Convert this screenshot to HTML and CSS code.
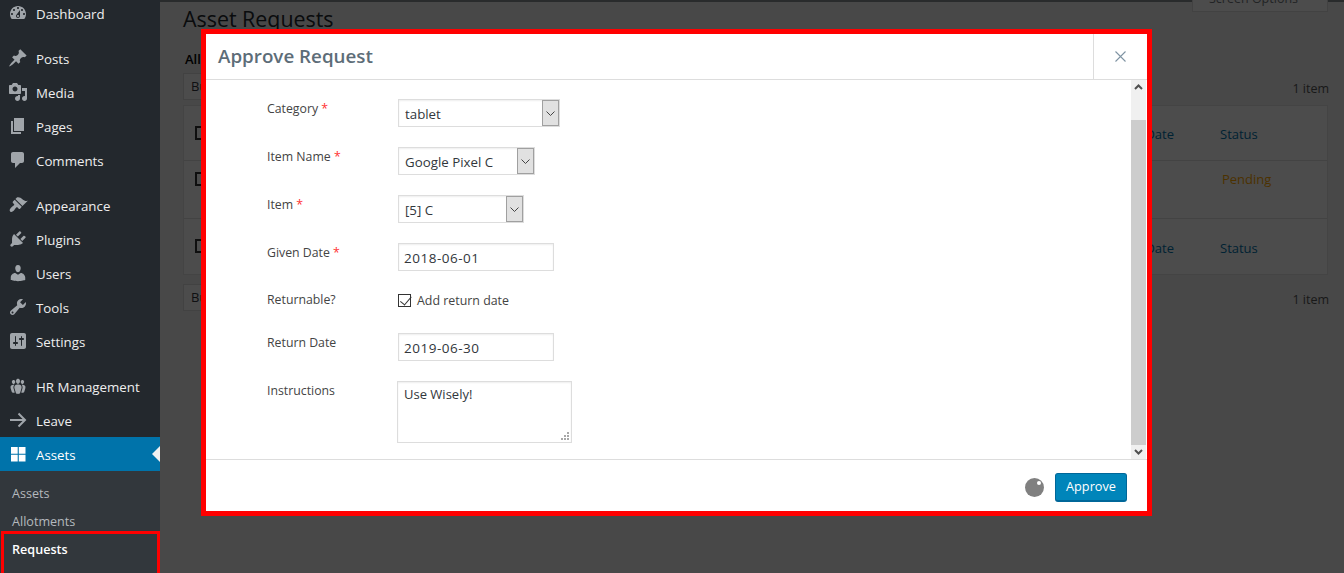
FILE: index.html
```html
<!DOCTYPE html>
<html lang="en">
<head>
<meta charset="utf-8">
<title>Asset Requests</title>
<link rel="stylesheet" href="styles.css">
</head>
<body>
<div class="page">
  <nav class="sidebar">
    <ul class="menu">
      <li class="item"><svg class="icon" viewBox="0 0 20 20"><path fill-rule="evenodd" d="M3.76 16h12.48c1.1-1.37 1.76-3.11 1.76-5 0-4.42-3.58-8-8-8s-8 3.58-8 8c0 1.89.66 3.63 1.76 5zM10 4c.55 0 1 .45 1 1s-.45 1-1 1-1-.45-1-1 .45-1 1-1zM6 6c.55 0 1 .45 1 1s-.45 1-1 1-1-.45-1-1 .45-1 1-1zm8 0c.55 0 1 .45 1 1s-.45 1-1 1-1-.45-1-1 .45-1 1-1zm-5.37 5.55L12 7v6c0 1.1-.9 2-2 2s-2-.9-2-2c0-.57.24-1.08.63-1.45zM4 10c.55 0 1 .45 1 1s-.45 1-1 1-1-.45-1-1 .45-1 1-1zm12 0c.55 0 1 .45 1 1s-.45 1-1 1-1-.45-1-1 .45-1 1-1zm-5 3c0-.55-.45-1-1-1s-1 .45-1 1 .45 1 1 1 1-.45 1-1z"/></svg><span class="item-text">Dashboard</span></li>
      <li class="item sep"><svg class="icon" viewBox="0 0 20 20"><path d="M10.44 3.02l1.82-1.82 6.36 6.35-1.83 1.82c-1.05-.68-2.48-.57-3.41.36l-.75.75c-.92.93-1.04 2.35-.35 3.41l-1.83 1.82-2.41-2.41-2.8 2.79c-.42.42-3.38 2.71-3.8 2.29s1.86-3.39 2.28-3.81l2.79-2.79L4.1 9.36l1.83-1.82c1.05.69 2.48.57 3.4-.36l.75-.75c.93-.92 1.05-2.35.36-3.41z"/></svg><span class="item-text">Posts</span></li>
      <li class="item"><svg class="icon" viewBox="0 0 20 20"><path fill-rule="evenodd" d="M13 11V4c0-.55-.45-1-1-1h-1.67L9 1H5L3.67 3H2c-.55 0-1 .45-1 1v7c0 .55.45 1 1 1h10c.55 0 1-.45 1-1zM7 4.5c1.38 0 2.5 1.12 2.5 2.5S8.38 9.5 7 9.5 4.5 8.38 4.5 7 5.62 4.5 7 4.5zM14 6h5v10.5c0 1.38-1.12 2.5-2.5 2.5S14 17.88 14 16.5s1.12-2.5 2.5-2.5c.17 0 .34.02.5.05V9h-3V6zm-4 8.05V13h2v3.5c0 1.38-1.12 2.5-2.5 2.5S7 17.88 7 16.5 8.12 14 9.5 14c.17 0 .34.02.5.05z"/></svg><span class="item-text">Media</span></li>
      <li class="item"><svg class="icon" viewBox="0 0 20 20"><path d="M6 15V2h10v13H6zm-1 1h8v2H3V5h2v11z"/></svg><span class="item-text">Pages</span></li>
      <li class="item"><svg class="icon" viewBox="0 0 20 20"><path d="M5 2h9c1.1 0 2 .9 2 2v7c0 1.1-.9 2-2 2h-2l-5 5v-5H5c-1.1 0-2-.9-2-2V4c0-1.1.9-2 2-2z"/></svg><span class="item-text">Comments</span></li>
      <li class="item sep"><svg class="icon" viewBox="0 0 20 20"><path d="M14.48 11.06L7.41 3.99l1.5-1.5c.5-.56 2.3-.47 3.51.32 1.21.8 1.43 1.28 2.91 2.1 1.18.64 2.45 1.26 4.45.85zm-.71.71L6.7 4.7 4.93 6.47c-.39.39-.39 1.02 0 1.41l1.06 1.06c.39.39.39 1.03 0 1.42-.6.6-1.43 1.11-2.21 1.69-.35.26-.7.53-1.01.84-1.1 1.1-1.5 2.6-.6 3.5.9.9 2.4.5 3.5-.6.31-.31.58-.66.84-1.01.58-.78 1.09-1.61 1.69-2.21.39-.39 1.03-.39 1.42 0l1.06 1.06c.39.39 1.02.39 1.41 0z"/></svg><span class="item-text">Appearance</span></li>
      <li class="item"><svg class="icon" viewBox="0 0 20 20"><path d="M13.11 4.36L9.87 7.6 8 5.73l3.24-3.24c.35-.34 1.05-.2 1.56.32.52.51.66 1.21.31 1.55zm-8 1.77l.91-1.12 9.01 9.01-1.19.84c-.71.71-2.63 1.16-3.82 1.16H6.14L4.9 17.26c-.59.59-1.54.59-2.12 0-.59-.58-.59-1.53 0-2.12l1.24-1.24v-3.88c0-1.13.4-3.19 1.09-3.89zm7.26 3.97l3.24-3.24c.34-.35 1.04-.21 1.55.31.52.51.66 1.21.31 1.55l-3.24 3.25z"/></svg><span class="item-text">Plugins</span></li>
      <li class="item"><svg class="icon" viewBox="0 0 20 20"><path d="M10 9.25c-2.27 0-2.73-3.44-2.73-3.44C7 4.02 7.82 2 9.97 2c2.16 0 2.98 2.02 2.71 3.81 0 0-.41 3.44-2.68 3.44zm0 2.57L12.72 10c2.39 0 4.52 2.33 4.52 4.53v2.49s-3.65 1.13-7.24 1.13c-3.65 0-7.24-1.13-7.24-1.13v-2.49c0-2.25 1.94-4.48 4.47-4.48z"/></svg><span class="item-text">Users</span></li>
      <li class="item"><svg class="icon" viewBox="0 0 20 20"><path fill-rule="evenodd" d="M16.68 9.77c-1.34 1.34-3.3 1.67-4.95.99l-5.41 6.52c-.99.99-2.59.99-3.58 0s-.99-2.59 0-3.57l6.52-5.42c-.68-1.65-.35-3.61.99-4.95 1.28-1.28 3.12-1.62 4.72-1.06l-2.89 2.89 2.82 2.82 2.86-2.87c.53 1.58.18 3.39-1.08 4.65zM3.81 16.21c.4.39 1.04.39 1.43 0 .4-.4.4-1.04 0-1.43-.39-.4-1.03-.4-1.43 0-.39.39-.39 1.03 0 1.43z"/></svg><span class="item-text">Tools</span></li>
      <li class="item"><svg class="icon" viewBox="0 0 20 20"><path fill-rule="evenodd" d="M18 16V4c0-1.1-.9-2-2-2H4c-1.1 0-2 .9-2 2v12c0 1.1.9 2 2 2h12c1.1 0 2-.9 2-2zM8 11h1c.55 0 1 .45 1 1s-.45 1-1 1H8v1.5c0 .28-.22.5-.5.5s-.5-.22-.5-.5V13H6c-.55 0-1-.45-1-1s.45-1 1-1h1V5.5c0-.28.22-.5.5-.5s.5.22.5.5V11zm5-2h-1c-.55 0-1-.45-1-1s.45-1 1-1h1V5.5c0-.28.22-.5.5-.5s.5.22.5.5V7h1c.55 0 1 .45 1 1s-.45 1-1 1h-1v5.5c0 .28-.22.5-.5.5s-.5-.22-.5-.5V9z"/></svg><span class="item-text">Settings</span></li>
      <li class="item sep"><svg class="icon" viewBox="0 0 20 20"><path d="M8.03 4.46c-.29 1.28.55 3.46 1.97 3.46 1.41 0 2.25-2.18 1.96-3.46-.22-.98-1.08-1.63-1.96-1.63-.89 0-1.74.65-1.97 1.63zm-4.13.9c-.25 1.08.47 2.93 1.67 2.93s1.92-1.85 1.67-2.93c-.19-.83-.92-1.39-1.67-1.39s-1.48.56-1.67 1.39zm8.86 0c-.25 1.08.47 2.93 1.66 2.93 1.2 0 1.92-1.85 1.67-2.93-.19-.83-.92-1.39-1.67-1.39-.74 0-1.47.56-1.66 1.39zm-.59 11.43l1.25-4.3C14.2 10 12.71 8.47 10 8.47c-2.72 0-4.21 1.53-3.44 4.02l1.26 4.3C8.05 17.51 9 18 10 18c.98 0 1.94-.49 2.17-1.21zm-6.1-7.63c-.49.67-.96 1.83-.42 3.59l1.12 3.79c-.34.2-.77.31-1.2.31-.85 0-1.65-.41-1.85-1.03l-1.07-3.65c-.65-2.11.61-3.4 2.92-3.4.27 0 .54.02.79.06-.1.1-.2.22-.29.33zm8.35-.39c2.31 0 3.58 1.29 2.92 3.4l-1.07 3.65c-.2.62-1 1.03-1.85 1.03-.43 0-.86-.11-1.2-.31l1.11-3.77c.55-1.78.08-2.94-.42-3.61-.08-.11-.18-.23-.28-.33.25-.04.51-.06.79-.06z"/></svg><span class="item-text">HR Management</span></li>
      <li class="item"><svg class="icon" viewBox="0 0 20 20"><path class="arrow" d="M2 10h15M10.5 3.5L17 10l-6.5 6.5"/></svg><span class="item-text">Leave</span></li>
      <li class="item active"><svg class="icon" viewBox="0 0 20 20"><path d="M3 3h6.7v6.7H3zM10.8 3h6.7v6.7h-6.7zM3 10.8h6.7v6.7H3zM10.8 10.8h6.7v6.7h-6.7z"/></svg><span class="item-text">Assets</span></li>
    </ul>
    <ul class="submenu">
      <li class="subitem">Assets</li>
      <li class="subitem">Allotments</li>
      <li class="subitem current">Requests</li>
    </ul>
  </nav>

  <main class="main">
    <div class="topstrip"></div>
    <div class="screen-tab-row"><span class="screen-tab">Screen Options</span></div>
    <h1 class="title">Asset Requests</h1>
    <div class="filters"><b>All</b></div>
    <div class="tablenav"><span class="bulk">Bulk Actions</span><span class="count">1 item</span></div>
    <div class="table">
      <div class="row head"><span class="cb"></span><span class="date">Return Date</span><a class="status">Status</a></div>
      <div class="row body"><span class="cb"></span><span class="pending">Pending</span></div>
      <div class="row foot"><span class="cb"></span><span class="date">Return Date</span><a class="status">Status</a></div>
    </div>
    <div class="tablenav lower"><span class="bulk">Bulk Actions</span><span class="count">1 item</span></div>
    <div class="dim"></div>
  </main>
</div>

<section class="modal">
  <header class="modal-head">
    <h2 class="modal-title">Approve Request</h2>
    <button class="close" type="button">
      <svg class="close-x" viewBox="0 0 11 11"><path d="M.5.5l10 10M10.5.5l-10 10"/></svg>
    </button>
  </header>
  <div class="modal-body">
    <form class="form">
      <div class="field"><label class="label">Category <i>*</i></label>
        <span class="select w-cat"><select><option>tablet</option></select><span class="select-btn"><svg viewBox="0 0 9 5"><path d="M.5.5l4 4 4-4"/></svg></span></span></div>
      <div class="field"><label class="label">Item Name <i>*</i></label>
        <span class="select w-name"><select><option>Google Pixel C</option></select><span class="select-btn"><svg viewBox="0 0 9 5"><path d="M.5.5l4 4 4-4"/></svg></span></span></div>
      <div class="field"><label class="label">Item <i>*</i></label>
        <span class="select w-item"><select><option>[5] C</option></select><span class="select-btn"><svg viewBox="0 0 9 5"><path d="M.5.5l4 4 4-4"/></svg></span></span></div>
      <div class="field"><label class="label">Given Date <i>*</i></label><input class="input" type="text" value="2018-06-01"></div>
      <div class="field short"><label class="label">Returnable?</label><label class="check"><input type="checkbox" checked>Add return date</label></div>
      <div class="field"><label class="label">Return Date</label><input class="input" type="text" value="2019-06-30"></div>
      <div class="field last"><label class="label">Instructions</label>
        <span class="textarea-wrap"><textarea class="textarea">Use Wisely!</textarea><svg class="grip" viewBox="0 0 8 8"><path d="M6 0h2v2H6zM3 3h2v2H3zM6 3h2v2H6zM0 6h2v2H0zM3 6h2v2H3zM6 6h2v2H6z"/></svg></span></div>
    </form>
    <div class="scrollbar">
      <span class="sb-btn"><svg viewBox="0 0 9 6"><path d="M1 5l3.5-3.5L8 5"/></svg></span>
      <span class="sb-gap"></span>
      <span class="sb-thumb"></span>
      <span class="sb-btn"><svg viewBox="0 0 9 6"><path d="M1 1l3.5 3.5L8 1"/></svg></span>
    </div>
  </div>
  <footer class="modal-foot">
    <span class="spinner"></span>
    <button class="approve" type="button">Approve</button>
  </footer>
</section>
</body>
</html>
```
FILE: styles.css
```css
* { box-sizing: border-box; }
html, body { margin: 0; height: 573px; overflow: hidden; }
body { font-family: "Open Sans", "Noto Sans", sans-serif; font-size: 13px; color: #444; background: #f1f1f1; }
ul { list-style: none; margin: 0; padding: 0; }

.page { display: flex; height: 573px; }

/* Sidebar */
.sidebar { width: 160px; flex: none; background: #23282d; overflow: hidden; }
.menu { margin-top: -4px; }
.item { display: flex; align-items: center; height: 34px; padding-left: 8px; gap: 8px; font-size: 13.3px; color: #eee; position: relative; }
.item-text { padding-top: 2px; }
.item.sep { margin-top: 11px; }
.icon { width: 20px; height: 20px; fill: #a0a5aa; flex: none; }
.arrow { fill: none; stroke: #a0a5aa; stroke-width: 2; }
.item.active { background: #0073aa; color: #fff; }
.item.active .icon { fill: #fff; }
.item.active::after { content: ""; position: absolute; right: 0; top: 9px; border: 8px solid transparent; border-right-color: #f1f1f1; border-left-width: 0; }
.submenu { background: #32373c; padding-top: 9px; height: 103px; }
.subitem { height: 28px; line-height: 28px; padding-left: 12px; font-size: 12.6px; color: #b4b9be; }
.subitem.current { color: #fff; font-weight: 600; position: relative; }
.subitem.current::after { content: ""; position: absolute; left: 1px; right: 0; top: -5px; height: 39px; border: 3px solid #f00; }

/* Main page, dimmed */
.main { flex: 1; position: relative; overflow: hidden; padding: 0 16px 0 23px; }
.topstrip { height: 2px; margin: 0 -16px 0 -23px; background: #8a9095; }
.screen-tab-row { display: flex; justify-content: flex-end; height: 0; }
.screen-tab { margin-top: -9px; height: 19px; width: 136px; padding-left: 16px; border: 1px solid #ddd; background: #fff; line-height: 10px; font-size: 12.5px; white-space: nowrap; color: #72777c; }
.title { margin: 2px 0 0; font-size: 21.4px; font-weight: 400; line-height: 29px; color: #23282d; }
.filters { margin-top: 16px; height: 20px; padding-left: 2px; line-height: 20px; color: #000; }
.filters b { font-weight: 600; }
.tablenav { display: flex; justify-content: space-between; align-items: center; height: 27px; margin-top: 4px; }
.bulk { height: 27px; width: 120px; border: 1px solid #ddd; background: #fff; line-height: 24px; padding-left: 7px; color: #32373c; }
.count { position: relative; top: 2px; left: 1px; font-size: 12.5px; color: #555; }
.table { margin-top: 5px; border: 1px solid #e5e5e5; background: #fff; }
.row { position: relative; padding-left: 11px; border-bottom: 1px solid #e1e1e1; }
.row:last-child { border-bottom: 0; }
.head { height: 55px; }
.body { height: 58px; }
.foot { height: 55px; }
.cb { display: inline-block; width: 14px; height: 14px; margin-top: 20px; border: 2px solid #333; }
.body .cb { margin-top: 11px; }
.date, .status, .pending { position: absolute; top: 18px; font-size: 13px; line-height: 20px; white-space: nowrap; }
.foot .date, .foot .status { top: 19px; }
.date { right: 153px; color: #0073aa; }
.status { left: 1036px; color: #0073aa; }
.pending { left: 1038px; top: 8px; color: #ffa700; }
.tablenav.lower { margin-top: 9px; }
.dim { position: absolute; inset: 0; z-index: 1; background: rgba(0, 0, 0, .7); }

/* Modal */
.modal { position: fixed; z-index: 3; left: 201px; top: 29px; width: 951px; height: 487px; border: 5px solid #f00; background: #fff; display: flex; flex-direction: column; }
.modal-head { display: flex; height: 46px; flex: none; border-bottom: 1px solid #ddd; }
.modal-title { flex: 1; margin: 0; padding-left: 12px; font-size: 18.8px; font-weight: 600; line-height: 45px; color: #5d6d78; }
.close { width: 54px; margin: 0; padding: 0; border: 0; border-left: 1px solid #ddd; background: #fff; display: flex; align-items: center; justify-content: center; }
.close-x { width: 11px; height: 11px; fill: none; stroke: #7f94a3; stroke-width: 1.1; }
.modal-body { flex: 1; display: flex; min-height: 0; }
.form { flex: 1; padding: 19px 0 0 61px; }
.field { display: flex; align-items: flex-start; height: 28px; margin-bottom: 20px; }
.field.short { height: 22px; }
.field.last { margin-bottom: 0; height: 62px; }
.label { width: 131px; flex: none; padding-top: 1px; font-size: 12.3px; line-height: 18px; color: #444; }
.label i { font-style: normal; color: #f33; }
.short .label { padding-top: 0; }

.select { position: relative; display: block; height: 28px; }
.select select { appearance: none; -webkit-appearance: none; width: 100%; height: 28px; margin: 0; padding: 2px 0 0 6px; border: 1px solid #ddd; border-radius: 0; background: #fff; box-shadow: inset 0 1px 2px rgba(0, 0, 0, .07); font: 13.3px "Open Sans", sans-serif; color: #32373c; }
.select-btn { position: absolute; right: 1px; top: 1px; bottom: 1px; width: 17px; background: #e1e1e1; border: 1px solid #a0a0a0; display: flex; align-items: center; justify-content: center; }
.select-btn svg { width: 9px; height: 5px; fill: none; stroke: #444; stroke-width: 1; }
.w-cat { width: 162px; }
.w-name { width: 137px; }
.w-item { width: 126px; }
.input { width: 156px; height: 28px; margin: 0; padding: 2px 5px 0; border: 1px solid #ddd; background: #fff; box-shadow: inset 0 1px 2px rgba(0, 0, 0, .07); font: 13.5px "Open Sans", sans-serif; letter-spacing: .5px; color: #32373c; outline: 0; }
.check { display: flex; align-items: center; height: 18px; font-size: 12.4px; color: #444; }
.check input { appearance: none; -webkit-appearance: none; position: relative; width: 13px; height: 13px; margin: 0 6px 0 0; border: 1px solid #333; background: #fff; }
.check input::after { content: ""; position: absolute; left: 3.5px; top: -.5px; width: 5px; height: 9.5px; border: solid #333; border-width: 0 1.2px 1.2px 0; transform: rotate(40deg); }
.textarea-wrap { position: relative; display: block; width: 175px; height: 62px; margin-left: -1px; }
.textarea { display: block; width: 100%; height: 100%; margin: 0; padding: 3px 6px; border: 1px solid #ddd; background: #fff; box-shadow: inset 0 1px 2px rgba(0, 0, 0, .07); font: 13px "Open Sans", sans-serif; color: #32373c; outline: 0; resize: none; }
.grip { position: absolute; right: 3px; bottom: 3px; width: 8px; height: 8px; fill: #a8a8a8; }

.scrollbar { width: 16px; flex: none; display: flex; flex-direction: column; background: #f0f0f0; border-right: 1px solid #fff; }
.sb-btn { height: 14px; flex: none; display: flex; align-items: center; justify-content: center; }
.sb-btn svg { width: 9px; height: 6px; fill: none; stroke: #505050; stroke-width: 2; }
.sb-gap { height: 26px; flex: none; }
.sb-thumb { flex: 1; background: #cdcdcd; }

.modal-foot { height: 52px; flex: none; border-top: 1px solid #ddd; display: flex; align-items: center; justify-content: flex-end; padding: 4px 20px 0 0; gap: 11px; }
.spinner { position: relative; width: 19px; height: 19px; border-radius: 50%; background: #808080; }
.spinner::after { content: ""; position: absolute; right: 3px; top: 3px; width: 4px; height: 4px; border-radius: 50%; background: #fff; }
.approve { width: 72px; height: 29px; margin: 0; padding: 0 0 2px; border: 1px solid #006799; border-bottom-width: 2px; border-radius: 3px; background: #0085ba; font: 12.7px "Open Sans", sans-serif; color: #fff; }
```
